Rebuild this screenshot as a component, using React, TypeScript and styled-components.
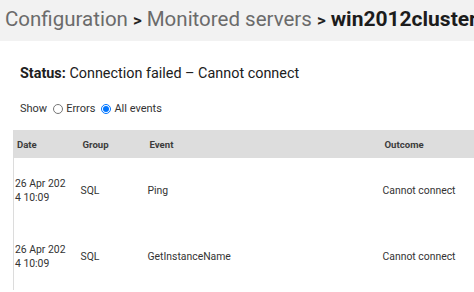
import React from "react";
import styled, { createGlobalStyle } from "styled-components";

const GlobalStyle = createGlobalStyle`
  html, body {
    margin: 0;
    padding: 0;
    background: #ffffff;
    overflow: hidden;
  }
  body {
    font-family: Roboto, "Liberation Sans", Arial, sans-serif;
    color: #222;
  }
`;

interface EventRow {
  id: number;
  date: string;
  group: string;
  event: string;
  outcome: string;
}

const rows: Array<EventRow> = [
  { id: 1, date: "26 Apr 2024 10:09", group: "SQL", event: "Ping", outcome: "Cannot connect" },
  { id: 2, date: "26 Apr 2024 10:09", group: "SQL", event: "GetInstanceName", outcome: "Cannot connect" },
];

export default function App() {
  return (
    <Page>
      <GlobalStyle />
      <Breadcrumb>
        <Crumb>Configuration</Crumb>
        <Sep>&gt;</Sep>
        <Crumb>Monitored servers</Crumb>
        <Sep>&gt;</Sep>
        <Current>win2012cluster</Current>
      </Breadcrumb>
      <Content>
        <Status>
          <b>Status:</b> Connection failed – Cannot connect
        </Status>
        <Filter>
          <span>Show</span>
          <RadioLabel>
            <input type="radio" name="show" />
            Errors
          </RadioLabel>
          <RadioLabel>
            <input type="radio" name="show" defaultChecked />
            All events
          </RadioLabel>
        </Filter>
      </Content>
      <Table>
        <colgroup>
          <col style={{ width: 65 }} />
          <col style={{ width: 67 }} />
          <col style={{ width: 235 }} />
          <col style={{ width: 140 }} />
        </colgroup>
        <thead>
          <tr>
            <Th>Date</Th>
            <Th>Group</Th>
            <Th>Event</Th>
            <Th>Outcome</Th>
          </tr>
        </thead>
        <tbody>
          {rows.map((row) => (
            <tr key={row.id}>
              <DateCell>{row.date}</DateCell>
              <Td>{row.group}</Td>
              <Td>{row.event}</Td>
              <Td>{row.outcome}</Td>
            </tr>
          ))}
        </tbody>
      </Table>
    </Page>
  );
}

const Page = styled.div`
  width: 474px;
  height: 292px;
  overflow: hidden;
`;

const Breadcrumb = styled.div`
  display: flex;
  align-items: baseline;
  gap: 5px;
  height: 41px;
  padding: 6px 0 0 5px;
  box-sizing: border-box;
  background: #f2f2f2;
  white-space: nowrap;
  overflow: hidden;
  font-size: 20.5px;
  line-height: 26px;
`;

const Crumb = styled.span`
  color: #6b6b6b;
`;

const Sep = styled.span`
  color: #222;
  font-weight: 700;
  font-size: 17px;
`;

const Current = styled.span`
  color: #1c1c1c;
  font-weight: 700;
  font-size: 21px;
`;

const Content = styled.div`
  padding: 24px 0 0 20px;
`;

const Status = styled.div`
  font-size: 14.4px;
  line-height: 18px;
  color: #202020;

  b {
    font-weight: 700;
  }
`;

const Filter = styled.div`
  display: flex;
  align-items: center;
  gap: 4px;
  margin-top: 19px;
  font-size: 11px;
  color: #333;
`;

const RadioLabel = styled.label`
  display: flex;
  align-items: center;
  gap: 3px;

  input {
    width: 10px;
    height: 10px;
    margin: 0 0 0 2px;
  }
`;

const Table = styled.table`
  margin: 15px 0 0 13px;
  width: 508px;
  table-layout: fixed;
  border-collapse: collapse;
  border-left: 1px solid #dcdcdc;
  font-size: 10.4px;

  tbody tr {
    height: 66px;
  }
`;

const Th = styled.th`
  background: #dddddd;
  height: 28px;
  padding: 0 0 0 4px;
  text-align: left;
  font-weight: 700;
  font-size: 9.6px;
  color: #3c3c3c;

  &:first-child {
    padding-left: 3px;
  }
`;

const Td = styled.td`
  padding: 0 0 0 2px;
  vertical-align: middle;
  color: #333;
  line-height: 14px;
`;

const DateCell = styled(Td)`
  word-break: break-all;
  padding: 0 12px 0 1px;
`;
